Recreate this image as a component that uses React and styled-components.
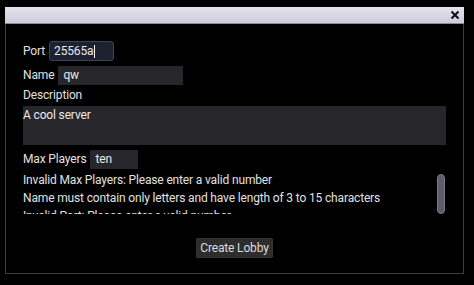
import React from "react";
import styled, { createGlobalStyle } from "styled-components";

const Global = createGlobalStyle`
  html, body { margin: 0; padding: 0; background: #000; }
  body { font-family: Roboto, "Noto Sans", sans-serif; }
`;

const Screen = styled.div`
  width: 474px;
  height: 285px;
  background: #000;
  padding: 7px 0 0 5px;
  box-sizing: border-box;
`;

const Window = styled.div`
  width: 459px;
  height: 267px;
  box-sizing: border-box;
  border: 1px solid #3e3e3e;
  border-top: none;
  display: flex;
  flex-direction: column;
  background: #000;
`;

const TitleBar = styled.div`
  height: 17px;
  margin: 0 -1px;
  background: linear-gradient(#e4e4ee, #cdcddb);
  border-bottom: 1px solid #8a8a96;
  display: flex;
  justify-content: flex-end;
  align-items: center;
  padding-right: 4px;
  box-sizing: border-box;
`;

const Body = styled.div`
  padding: 17px 17px 0 17px;
  display: flex;
  flex-direction: column;
  color: #e0e0e0;
  font-size: 12px;
  letter-spacing: -0.15px;
`;

const Row = styled.div`
  display: flex;
  align-items: center;
  gap: 4px;
  height: 20px;
  margin-bottom: ${(p) => p.$mb ?? 4}px;
`;

const Label = styled.span`
  line-height: 20px;
`;

const Field = styled.div`
  width: ${(p) => p.$w}px;
  height: ${(p) => p.$h ?? 19}px;
  box-sizing: border-box;
  background: ${(p) => (p.$focus ? "#1e2230" : "#27272b")};
  border: 1px solid ${(p) => (p.$focus ? "#39445a" : "#27272b")};
  border-radius: ${(p) => (p.$focus ? 3 : 0)}px;
  padding: 0 4px;
  display: flex;
  align-items: center;
  color: #e8e8e8;
`;

const Caret = styled.span`
  display: inline-block;
  width: 1px;
  height: 13px;
  background: #fff;
  margin-left: 1px;
`;

const TextArea = styled.div`
  height: 39px;
  background: #27272b;
  padding: 1px 0 0 0;
  box-sizing: border-box;
  line-height: 16px;
  margin: 1px 0 4px 0;
  color: #e8e8e8;
`;

const ErrorsBox = styled.div`
  position: relative;
  height: 43px;
  overflow: hidden;
  margin-top: 2px;
`;

const ErrorLine = styled.div`
  line-height: 18px;
  white-space: nowrap;
`;

const Scrollbar = styled.div`
  position: absolute;
  right: 1px;
  top: 3px;
  width: 8px;
  height: 40px;
  border-radius: 4px;
  background: #5e5e6a;
  border: 1px solid #7a7a88;
  box-sizing: border-box;
`;

const Footer = styled.div`
  display: flex;
  justify-content: center;
  padding-top: 24px;
`;

const Button = styled.button`
  font-family: inherit;
  font-size: 12px;
  letter-spacing: -0.15px;
  color: #dcdcdc;
  background: #2d2d2d;
  border: 1px solid #333;
  height: 20px;
  padding: 0 3px;
  border-radius: 1px;
`;

export default function App() {
  return (
    <>
      <Global />
      <Screen>
        <Window>
          <TitleBar>
            <svg width="10" height="10" viewBox="0 0 10 10">
              <path d="M1.5 1.5 L8.5 8.5 M8.5 1.5 L1.5 8.5" stroke="#111" strokeWidth="2" />
            </svg>
          </TitleBar>
          <Body>
            <Row>
              <Label>Port</Label>
              <Field $w={65} $h={20} $focus>
                25565a<Caret />
              </Field>
            </Row>
            <Row $mb={0}>
              <Label>Name</Label>
              <Field $w={125}>qw</Field>
            </Row>
            <Row $mb={0}>
              <Label>Description</Label>
            </Row>
            <TextArea>A cool server</TextArea>
            <Row $mb={0}>
              <Label>Max Players</Label>
              <Field $w={48}>ten</Field>
            </Row>
            <ErrorsBox>
              <ErrorLine>Invalid Max Players: Please enter a valid number</ErrorLine>
              <ErrorLine>Name must contain only letters and have length of 3 to 15 characters</ErrorLine>
              <ErrorLine>Invalid Port: Please enter a valid number</ErrorLine>
              <Scrollbar />
            </ErrorsBox>
            <Footer>
              <Button>Create Lobby</Button>
            </Footer>
          </Body>
        </Window>
      </Screen>
    </>
  );
}
